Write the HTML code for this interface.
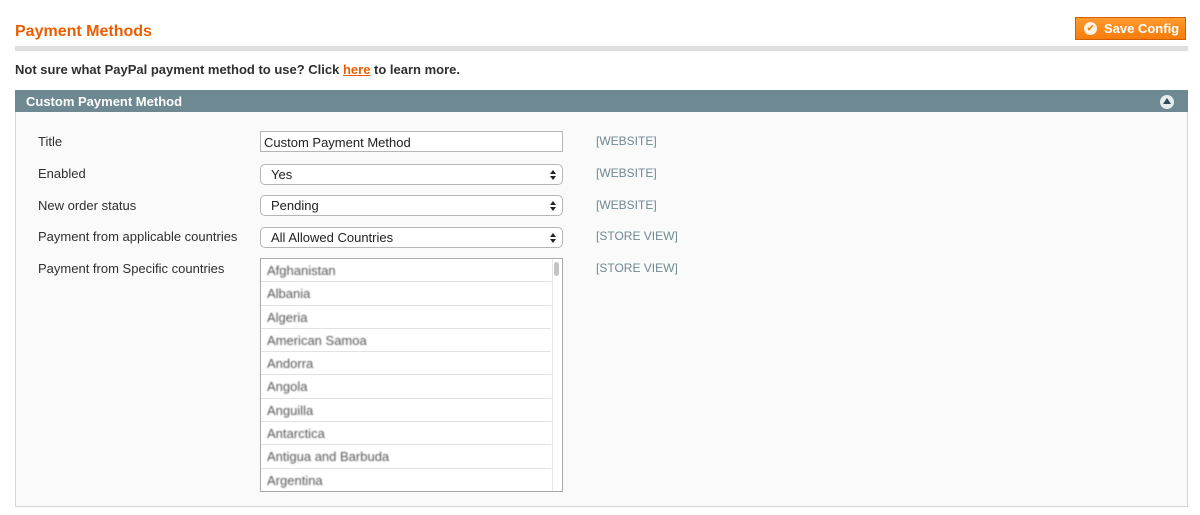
<!DOCTYPE html>
<html><head><style>
body{margin:0;background:#fff;font-family:"Liberation Sans",Arial,sans-serif;width:1200px;height:515px;position:relative;overflow:hidden}
.a{position:absolute}
h1{position:absolute;left:15px;top:23px;margin:0;font-size:16px;color:#eb5e00;font-weight:bold}
.btn{left:1075px;top:17px;width:111px;height:23px;background:linear-gradient(#ff9a2e,#f77c0c);border:1px solid #d26000;color:#fff;font-weight:bold;font-size:13px;box-sizing:border-box}
.lbl{left:38px;font-size:13px;color:#2f2f2f}
.sc{left:596px;font-size:12px;color:#6f8992}
.sel{left:260px;width:303px;height:21px;border:1px solid #b6b6b6;border-radius:5px;box-sizing:border-box;background:#fff;font-size:13px;padding:2px 0 0 10px;color:#222}
.sel:after{content:"";position:absolute;right:6px;top:5px;border:3px solid transparent;border-bottom:4px solid #222;border-top:0}
.sel:before{content:"";position:absolute;right:6px;top:11px;border:3px solid transparent;border-top:4px solid #222;border-bottom:0}
.li{height:23.3px;border-bottom:1px solid #e2e2e2;font-size:13px;color:transparent;text-shadow:0 0 1.5px #555;padding:4px 0 0 6px;box-sizing:border-box}
</style></head><body>
<h1>Payment Methods</h1>
<div class="a btn"><span class="a" style="left:8px;top:4px;width:13px;height:13px;border-radius:50%;background:#fff3e6;color:#f7840f;font-size:9px;line-height:13px;text-align:center">✔</span><span class="a" style="left:28px;top:3px">Save Config</span></div>
<div class="a" style="left:15px;top:46px;width:1173px;height:5px;background:#dedede"></div>
<div class="a" style="left:15px;top:62px;font-size:13px;font-weight:bold;color:#2f2f2f">Not sure what PayPal payment method to use? Click <span style="color:#eb5e00;text-decoration:underline">here</span> to learn more.</div>
<div class="a" style="left:15px;top:90px;width:1173px;height:22px;background:#6f8992"></div>
<div class="a" style="left:26px;top:94px;font-size:13px;font-weight:bold;color:#fff">Custom Payment Method</div>
<div class="a" style="left:1160px;top:95px;width:14px;height:14px;border-radius:50%;background:#e6ecee"><div class="a" style="left:3px;top:3px;border:4px solid transparent;border-bottom:6px solid #2f4a55;border-top:0"></div></div>
<div class="a" style="left:15px;top:112px;width:1171px;height:394px;border:1px solid #d6d6d6;border-top:0;background:#fafafa"></div>
<div class="a lbl" style="top:134px">Title</div>
<div class="a lbl" style="top:166px">Enabled</div>
<div class="a lbl" style="top:198px">New order status</div>
<div class="a lbl" style="top:229px">Payment from applicable countries</div>
<div class="a lbl" style="top:261px">Payment from Specific countries</div>
<div class="a" style="left:260px;top:131px;width:303px;height:21px;border:1px solid #b6b6b6;box-sizing:border-box;background:#fff;font-size:13px;padding:3px 0 0 3px;color:#222">Custom Payment Method</div>
<div class="a sel" style="top:164px">Yes</div>
<div class="a sel" style="top:195px">Pending</div>
<div class="a sel" style="top:227px">All Allowed Countries</div>
<div class="a sc" style="top:134px">[WEBSITE]</div>
<div class="a sc" style="top:166px">[WEBSITE]</div>
<div class="a sc" style="top:198px">[WEBSITE]</div>
<div class="a sc" style="top:229px">[STORE VIEW]</div>
<div class="a sc" style="top:261px">[STORE VIEW]</div>
<div class="a" style="left:260px;top:258px;width:303px;height:234px;border:1px solid #a9a9a9;box-sizing:border-box;background:#fff;overflow:hidden">
<div style="width:290px">
<div class="li">Afghanistan</div><div class="li">Albania</div><div class="li">Algeria</div><div class="li">American Samoa</div><div class="li">Andorra</div><div class="li">Angola</div><div class="li">Anguilla</div><div class="li">Antarctica</div><div class="li">Antigua and Barbuda</div><div class="li">Argentina</div></div>
<div class="a" style="left:291px;top:0;width:1px;height:234px;background:#e6e6e6"></div>
<div class="a" style="left:293px;top:3px;width:5px;height:14px;border-radius:3px;background:#c4c4c4"></div>
</div>
</body></html>
